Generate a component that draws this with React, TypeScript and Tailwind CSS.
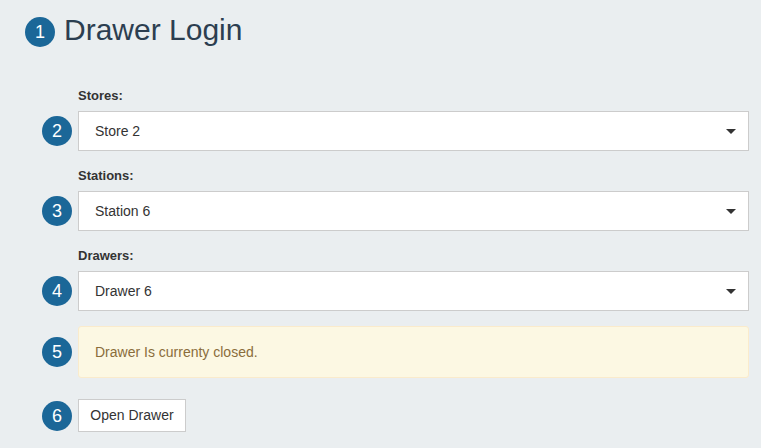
import React from "react";

const Badge = ({ n, className = "" }: { n: number; className?: string }) => (
  <div
    className={`flex h-[30px] w-[30px] shrink-0 items-center justify-center rounded-full bg-[#1b6798] text-[18px] leading-none text-white ${className}`}
  >
    {n}
  </div>
);

const Caret = () => (
  <svg width="10" height="5" viewBox="0 0 10 5" className="shrink-0">
    <path d="M0 0 L10 0 L5 5 Z" fill="#333" />
  </svg>
);

const SelectField = ({ n, label, value, first = false }: { n: number; label: string; value: string; first?: boolean }) => (
  <div className={first ? "" : "mt-[16px]"}>
    <div className="ml-[36px] mb-[6px] text-[13px] font-bold leading-[18px] text-[#333]">{label}</div>
    <div className="flex items-center gap-[6px]">
      <Badge n={n} />
      <div className="flex h-[40px] flex-1 items-center justify-between border border-[#ccc] bg-white pl-[16px] pr-[12px]">
        <span className="text-[14px] text-[#333]">{value}</span>
        <Caret />
      </div>
    </div>
  </div>
);

export default function App() {
  return (
    <div className="h-[448px] w-[761px] overflow-hidden bg-[#eaeef0] font-['Liberation_Sans',Arial,sans-serif]">
      <div className="flex items-start gap-[9px] pl-[25px] pt-[12px]">
        <Badge n={1} className="mt-[5px]" />
        <h1 className="text-[30px] leading-[36px] text-[#2c3e50]">Drawer Login</h1>
      </div>

      <div className="mt-[39px] pl-[42px] pr-[12px]">
        <SelectField n={2} label="Stores:" value="Store 2" first />
        <SelectField n={3} label="Stations:" value="Station 6" />
        <SelectField n={4} label="Drawers:" value="Drawer 6" />

        <div className="mt-[15px] flex items-center gap-[6px]">
          <Badge n={5} />
          <div className="flex h-[52px] flex-1 items-center rounded-[3px] border border-[#faebcc] bg-[#fcf8e3] pl-[16px] text-[14px] text-[#8a6d3b]">
            Drawer Is currenty closed.
          </div>
        </div>

        <div className="mt-[21px] flex items-center gap-[6px]">
          <Badge n={6} />
          <button
            type="button"
            className="h-[33px] w-[108px] border border-[#ccc] bg-white text-[14px] text-[#333]"
          >
            Open Drawer
          </button>
        </div>
      </div>
    </div>
  );
}
